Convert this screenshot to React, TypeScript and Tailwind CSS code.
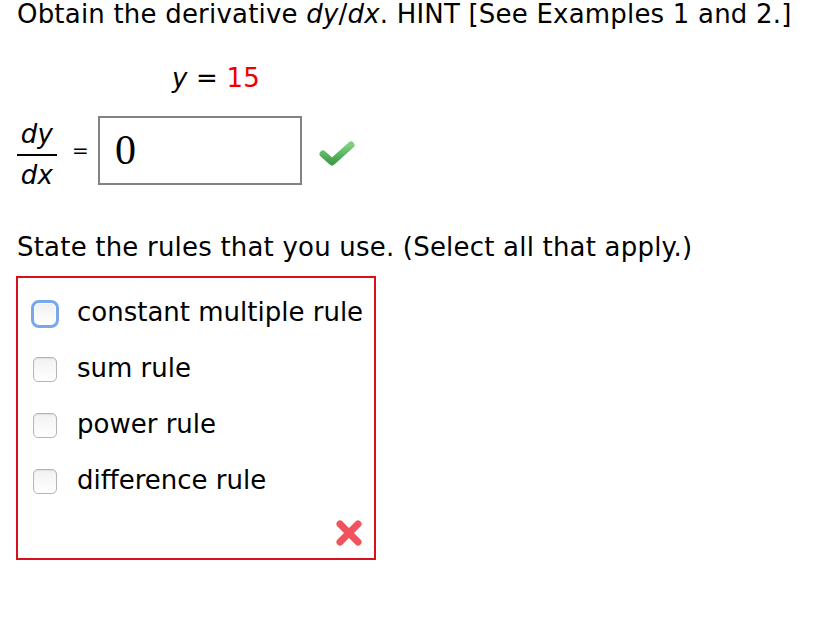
import React from "react";

const rules = ["constant multiple rule", "sum rule", "power rule", "difference rule"];

function CheckMark() {
  return (
    <svg width="36" height="28" viewBox="0 0 36 28">
      <defs>
        <linearGradient id="g" x1="0" y1="0" x2="0" y2="1">
          <stop offset="0" stopColor="#7fd07f" />
          <stop offset="1" stopColor="#3f9f47" />
        </linearGradient>
      </defs>
      <path d="M4 15 L13 23 L32 6" fill="none" stroke="url(#g)" strokeWidth="7" strokeLinecap="round" strokeLinejoin="round" />
    </svg>
  );
}

function Cross() {
  return (
    <svg width="28" height="28" viewBox="0 0 28 28">
      <path d="M5 5 L23 23 M23 5 L5 23" stroke="#f0525e" strokeWidth="7" strokeLinecap="round" />
    </svg>
  );
}

function Box({ focused }: { focused?: boolean }) {
  if (focused) {
    return (
      <div className="w-[28px] h-[28px] rounded-[8px] border-[3px] border-[#79a7ee] bg-white flex items-center justify-center">
        <div className="w-[20px] h-[20px] rounded-[4px] bg-gradient-to-b from-[#f0f0f0] to-white" />
      </div>
    );
  }
  return (
    <div className="w-[24px] h-[25px] rounded-[5px] border border-[#b5b5b5] bg-gradient-to-b from-[#f2f2f2] to-white shadow-[inset_0_1px_1px_rgba(0,0,0,0.08)]" />
  );
}

export default function App() {
  return (
    <div className="w-[820px] h-[638px] bg-white text-black font-['DejaVu_Sans',sans-serif] text-[26px] tracking-[0.2px] leading-none">
      <div className="pl-[17px] pt-[1px]">
        <p className="whitespace-nowrap">
          Obtain the derivative <i>dy</i>/<i>dx</i>. HINT [See Examples 1 and 2.]
        </p>
        <p className="pt-[38px] pl-[155px]">
          <i>y</i> = <span className="text-[#ee0000]">15</span>
        </p>
        <div className="flex items-center mt-[21px]">
          <div className="flex flex-col items-center w-[40px] pt-[9px]">
            <span className="italic pb-[7px]">dy</span>
            <span className="w-[40px] h-[2px] bg-black" />
            <span className="italic pt-[6px]">dx</span>
          </div>
          <span className="ml-[15px] text-[20px]">=</span>
          <div className="ml-[9px] w-[204px] h-[69px] border-2 border-[#828282] flex items-center pl-[15px] font-['Liberation_Serif',serif] text-[42px] tracking-normal">
            0
          </div>
          <div className="ml-[17px] mt-[6px]">
            <CheckMark />
          </div>
        </div>
        <p className="mt-[46px] whitespace-nowrap">State the rules that you use. (Select all that apply.)</p>
        <div className="mt-[16px] w-[360px] h-[284px] -ml-[1px] border-2 border-[#d9101c] relative pt-[22px] pl-[13px]">
          <div className="flex flex-col gap-[29px]">
            {rules.map((r, i) => (
              <div key={r} className="flex items-center h-[27px]">
                <div className="w-[28px] flex justify-center">
                  <Box focused={i === 0} />
                </div>
                <span className="ml-[18px] tracking-normal -mt-[3px]">{r}</span>
              </div>
            ))}
          </div>
          <div className="absolute right-[11px] bottom-[11px]">
            <Cross />
          </div>
        </div>
      </div>
    </div>
  );
}
